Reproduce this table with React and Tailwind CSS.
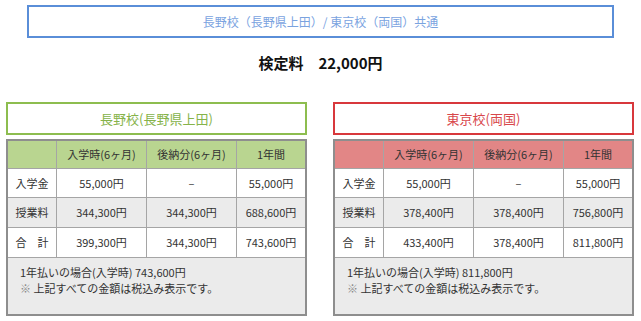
const schools = [
  {
    name: "長野校(長野県上田)",
    boxClass: "border-[#8dbd4f] text-[#86b34a]",
    headClass: "bg-[#b9d590]",
    rows: [
      ["入学金", "55,000円", "–", "55,000円"],
      ["授業料", "344,300円", "344,300円", "688,600円"],
      ["合　計", "399,300円", "344,300円", "743,600円"],
    ],
    total: "1年払いの場合(入学時) 743,600円",
  },
  {
    name: "東京校(両国)",
    boxClass: "border-[#d8383c] text-[#d8474b]",
    headClass: "bg-[#e28686]",
    rows: [
      ["入学金", "55,000円", "–", "55,000円"],
      ["授業料", "378,400円", "378,400円", "756,800円"],
      ["合　計", "433,400円", "378,400円", "811,800円"],
    ],
    total: "1年払いの場合(入学時) 811,800円",
  },
];

const rowStyles = [
  "h-[29px] bg-white",
  "h-[30px] bg-[#ebebeb]",
  "h-[30px] bg-white",
];

function Row({ cells, className }) {
  return (
    <div className={`flex border-b border-[#a5a5a5] ${className}`}>
      <div className="w-[49px] shrink-0 border-r border-[#a5a5a5] flex items-center justify-center">
        {cells[0]}
      </div>
      <div className="w-[90px] shrink-0 border-r border-[#a5a5a5] flex items-center justify-center">
        {cells[1]}
      </div>
      <div className="w-[90px] shrink-0 border-r border-[#a5a5a5] flex items-center justify-center">
        {cells[2]}
      </div>
      <div className="flex-1 flex items-center justify-center">{cells[3]}</div>
    </div>
  );
}

function Panel({ school }) {
  return (
    <div className="w-[301px]">
      <div
        className={`h-[33px] border-2 flex items-center justify-center text-[13px] ${school.boxClass}`}
      >
        {school.name}
      </div>
      <div className="mt-[4px] border-2 border-[#8e8e8e] text-[11px] text-[#333]">
        <Row
          cells={["", "入学時(6ヶ月)", "後納分(6ヶ月)", "1年間"]}
          className={`h-[28px] ${school.headClass}`}
        />
        {school.rows.map((r, i) => (
          <Row key={i} cells={r} className={rowStyles[i]} />
        ))}
        <div className="h-[56px] bg-[#ebebeb] pl-[12px] pt-[6px] leading-[16px]">
          <p>{school.total}</p>
          <p>
            <span className="text-[#888]">※</span> 上記すべての金額は税込み表示です。
          </p>
        </div>
      </div>
    </div>
  );
}

export default function App() {
  return (
    <div className="w-[641px] h-[321px] overflow-hidden bg-white font-['Noto_Sans_CJK_JP',sans-serif]">
      <div className="pt-[5px] px-[27px]">
        <div className="h-[33px] border-2 border-[#5a8ed8] flex items-center justify-center text-[12px] text-[#7aa3df]">
          長野校（長野県上田）/ 東京校（両国）共通
        </div>
      </div>
      <div className="mt-[14px] h-[22px] text-center font-bold text-[15px] leading-[22px] text-[#111]">
        検定料　22,000円
      </div>
      <div className="mt-[28px] flex px-[6px] gap-[26px]">
        {schools.map((s) => (
          <Panel key={s.name} school={s} />
        ))}
      </div>
    </div>
  );
}
